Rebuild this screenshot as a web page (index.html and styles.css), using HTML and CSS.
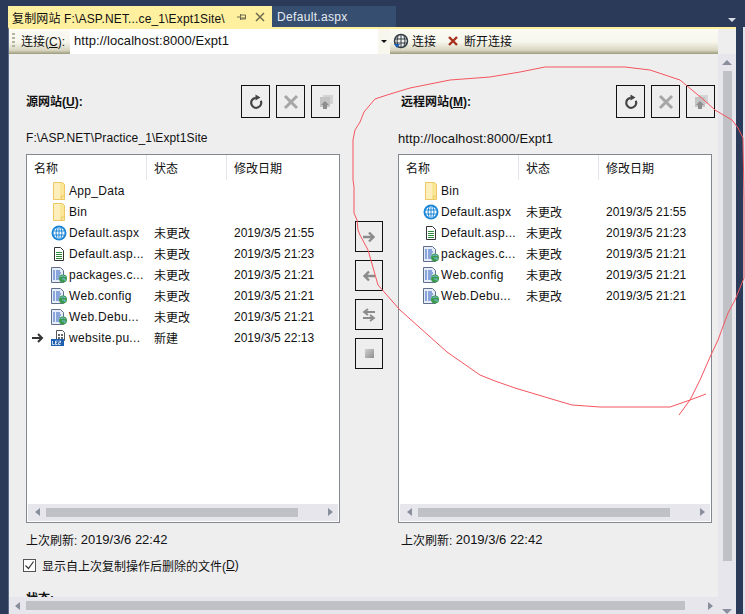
FILE: index.html
```html
<!DOCTYPE html>
<html lang="zh">
<head>
<meta charset="utf-8">
<title>复制网站</title>
<link rel="stylesheet" href="styles.css">
</head>
<body>
<div class="tabstrip">
  <div class="tab active"><span class="tab-title">复制网站 F:\ASP.NET...ce_1\Expt1Site\</span>
    <svg class="tab-pin" width="10" height="10" viewBox="0 0 10 10"><path d="M0 5h3M3.500 2v6M3.500 3h5v4h-5M4 6h4" fill="none" stroke="#6d6a4e"/></svg>
    <svg class="tab-x" width="10" height="10" viewBox="0 0 10 10"><path d="M1 1l8 8M9 1l-8 8" fill="none" stroke="#6d6a4e" stroke-width="1.5"/></svg>
  </div>
  <div class="tab inactive">Default.aspx</div>
  <div class="tab-spacer"></div>
  <svg class="tab-drop" width="8" height="5" viewBox="0 0 8 5"><path d="M0 0h8L4 4z" fill="#d6dbe6"/></svg>
</div>
<div class="frame">
  <div class="doc">
    <div class="toolbar">
      <span class="grip"></span>
      <span class="tb-label">连接(<u>C</u>):</span>
      <div class="url"><span>http://localhost:8000/Expt1</span><i class="url-arrow"></i></div>
      <svg class="tb-globe" width="16" height="16" viewBox="0 0 16 16"><circle cx="8" cy="8" r="6.500" fill="#f4f4ee" stroke="#333c46" stroke-width="1.500"/><path d="M2 6h12M2 10h12M8 2v12M5 3q-2 5 0 10M11 3q2 5 0 10" fill="none" stroke="#333c46"/><path d="M1 11h6l-3 4z" fill="#1c5fb0"/></svg>
      <span class="tb-btn">连接</span>
      <svg class="tb-x" width="10" height="10" viewBox="0 0 10 10"><path d="M1 1l8 8M9 1l-8 8" stroke="#a5301c" stroke-width="2.400" fill="none"/></svg>
      <span class="tb-btn">断开连接</span>
    </div>
    <div class="content">
      <div class="panes">
        <section class="pane">
          <div class="pane-head">
            <strong class="pane-title">源网站(<u>U</u>):</strong>
            <div class="tools">
              <button class="ic"><svg width="16" height="16" viewBox="0 0 16 16"><use href="#refresh"/></svg></button>
              <button class="ic"><svg width="16" height="16" viewBox="0 0 16 16"><use href="#cancel"/></svg></button>
              <button class="ic"><svg width="16" height="16" viewBox="0 0 16 16"><use href="#publish"/></svg></button>
            </div>
          </div>
          <div class="pane-path">F:\ASP.NET\Practice_1\Expt1Site</div>
          <div class="list">
            <div class="list-head"><span class="c1">名称</span><span class="c2">状态</span><span class="c3">修改日期</span></div>
            <div class="rows">
              <div class="row"><span class="mark"></span><svg class="fi" width="16" height="16" viewBox="0 0 16 16"><use href="#folder"/></svg><span class="n">App_Data</span></div>
              <div class="row"><span class="mark"></span><svg class="fi" width="16" height="16" viewBox="0 0 16 16"><use href="#folder"/></svg><span class="n">Bin</span></div>
              <div class="row"><span class="mark"></span><svg class="fi" width="16" height="16" viewBox="0 0 16 16"><use href="#globe"/></svg><span class="n">Default.aspx</span><span class="s">未更改</span><span class="d">2019/3/5 21:55</span></div>
              <div class="row"><span class="mark"></span><svg class="fi" width="16" height="16" viewBox="0 0 16 16"><use href="#code"/></svg><span class="n">Default.asp...</span><span class="s">未更改</span><span class="d">2019/3/5 21:23</span></div>
              <div class="row"><span class="mark"></span><svg class="fi" width="16" height="16" viewBox="0 0 16 16"><use href="#config"/></svg><span class="n">packages.c...</span><span class="s">未更改</span><span class="d">2019/3/5 21:21</span></div>
              <div class="row"><span class="mark"></span><svg class="fi" width="16" height="16" viewBox="0 0 16 16"><use href="#config"/></svg><span class="n">Web.config</span><span class="s">未更改</span><span class="d">2019/3/5 21:21</span></div>
              <div class="row"><span class="mark"></span><svg class="fi" width="16" height="16" viewBox="0 0 16 16"><use href="#config"/></svg><span class="n">Web.Debu...</span><span class="s">未更改</span><span class="d">2019/3/5 21:21</span></div>
              <div class="row"><span class="mark"><svg width="12" height="10" viewBox="0 0 12 10"><path d="M0 5h9M6 1l4 4-4 4" fill="none" stroke="#333" stroke-width="2"/></svg></span><svg class="fi" width="16" height="16" viewBox="0 0 16 16"><path d="M5.500 .5h6l2 2v8h-8z" fill="#fff" stroke="#555"/><path d="M7 4h2v2H7zM10 4h2v2h-2zM7 7h2v2H7zM10 7h2v2h-2z" fill="#666"/><path d="M0 9h13v7H0z" fill="#1c5fb0"/><path d="M1.500 11v3.500h2M4.500 11v3.500h2M4.500 12.700h1.500M4.500 11h2M7.500 11h2v1.700h-2v1.800h2" stroke="#fff" fill="none" stroke-width=".8"/></svg><span class="n">website.pu...</span><span class="s">新建</span><span class="d">2019/3/5 22:13</span></div>
            </div>
            <div class="hbar"><i class="al"></i><span class="thumb"></span><i class="ar"></i></div>
          </div>
          <div class="refresh">上次刷新: <span class="stamp">2019/3/6 22:42</span></div>
        </section>
        <div class="mid">
          <button class="ic mb"><svg width="16" height="16" viewBox="0 0 16 16"><path d="M2 8h10M8 3.500L12.500 8 8 12.500" fill="none" stroke="#8b8b8b" stroke-width="2.400"/></svg></button>
          <button class="ic mb"><svg width="16" height="16" viewBox="0 0 16 16"><path d="M14 8H4M8 3.500L3.500 8 8 12.500" fill="none" stroke="#8b8b8b" stroke-width="2.400"/></svg></button>
          <button class="ic mb"><svg width="16" height="16" viewBox="0 0 16 16"><path d="M14 5H4M7 2L3 5l4 3" fill="none" stroke="#8b8b8b" stroke-width="1.800"/><path d="M2 11h10M9 8l4 3-4 3" fill="none" stroke="#8b8b8b" stroke-width="1.800"/></svg></button>
          <button class="ic mb"><span class="stop"></span></button>
        </div>
        <section class="pane right">
          <div class="pane-head">
            <strong class="pane-title">远程网站(<u>M</u>):</strong>
            <div class="tools">
              <button class="ic"><svg width="16" height="16" viewBox="0 0 16 16"><use href="#refresh"/></svg></button>
              <button class="ic"><svg width="16" height="16" viewBox="0 0 16 16"><use href="#cancel"/></svg></button>
              <button class="ic"><svg width="16" height="16" viewBox="0 0 16 16"><use href="#publish"/></svg></button>
            </div>
          </div>
          <div class="pane-path url-path">http://localhost:8000/Expt1</div>
          <div class="list">
            <div class="list-head"><span class="c1">名称</span><span class="c2">状态</span><span class="c3">修改日期</span></div>
            <div class="rows">
              <div class="row"><span class="mark"></span><svg class="fi" width="16" height="16" viewBox="0 0 16 16"><use href="#folder"/></svg><span class="n">Bin</span></div>
              <div class="row"><span class="mark"></span><svg class="fi" width="16" height="16" viewBox="0 0 16 16"><use href="#globe"/></svg><span class="n">Default.aspx</span><span class="s">未更改</span><span class="d">2019/3/5 21:55</span></div>
              <div class="row"><span class="mark"></span><svg class="fi" width="16" height="16" viewBox="0 0 16 16"><use href="#code"/></svg><span class="n">Default.asp...</span><span class="s">未更改</span><span class="d">2019/3/5 21:23</span></div>
              <div class="row"><span class="mark"></span><svg class="fi" width="16" height="16" viewBox="0 0 16 16"><use href="#config"/></svg><span class="n">packages.c...</span><span class="s">未更改</span><span class="d">2019/3/5 21:21</span></div>
              <div class="row"><span class="mark"></span><svg class="fi" width="16" height="16" viewBox="0 0 16 16"><use href="#config"/></svg><span class="n">Web.config</span><span class="s">未更改</span><span class="d">2019/3/5 21:21</span></div>
              <div class="row"><span class="mark"></span><svg class="fi" width="16" height="16" viewBox="0 0 16 16"><use href="#config"/></svg><span class="n">Web.Debu...</span><span class="s">未更改</span><span class="d">2019/3/5 21:21</span></div>
            </div>
            <div class="hbar"><i class="al"></i><span class="thumb"></span><i class="ar"></i></div>
          </div>
          <div class="refresh">上次刷新: <span class="stamp">2019/3/6 22:42</span></div>
        </section>
      </div>
      <label class="check"><span class="box"><svg width="13" height="13" viewBox="0 0 13 13"><path d="M2.500 6.500l3 3 5-7" fill="none" stroke="#333" stroke-width="1.200"/></svg></span>显示自上次复制操作后删除的文件(<u>D</u>)</label>
      <strong class="status">状态:</strong>
      <div class="vbar"><i class="au"></i><span class="vthumb"></span><i class="ad"></i></div>
      <div class="hbar2"><i class="al"></i><span class="thumb2"></span><i class="ar"></i></div>
    </div>
  </div>
  <div class="edge"></div>
</div>
<svg class="defs" width="0" height="0">
  <defs>
    <g id="folder"><path d="M2.500 -.5h9l2 2v15h-11z" fill="#fbe596" stroke="#ecc964"/><path d="M3 0h6v16H3z" fill="#fdefbc"/><path d="M10.500 16v-3h3" fill="none" stroke="#ecc964"/></g>
    <g id="globe"><circle cx="8" cy="8" r="7.500" fill="#1c86d6"/><circle cx="8" cy="8" r="5.500" fill="#fff"/><path d="M3 6h10M3 10h10M8 3v10M6 3q-2 5 0 10M10 3q2 5 0 10" stroke="#1c86d6" fill="none"/></g>
    <g id="code"><path d="M3.500 1.500h6l3 3v10h-9z" fill="#fff" stroke="#333"/><path d="M5 6.500h6M5 8.500h6M5 10.500h6M5 12.500h6" stroke="#2d8a3a"/></g>
    <g id="config"><path d="M.5 .5h9l3 3v12H.5z" fill="#e6ecf8" stroke="#5f6f8c"/><path d="M2 4h2M5 4h4M2 6h2M5 6h5M2 8h2M5 8h4M2 10h2M5 10h3M2 12h2M5 12h3" stroke="#2c5fbd"/><circle cx="12" cy="11.500" r="4" fill="#3b9a4a"/><path d="M9.500 9.800q2.500-2 5 0M11 12h3v2" stroke="#7db8e8" fill="none"/></g>
    <g id="refresh"><path d="M12.800 6.800A5 5 0 1 1 7.800 3.800" fill="none" stroke="#444" stroke-width="2.200"/><path d="M7.500 0.500l5 3-5 3z" fill="#444"/></g>
    <g id="cancel"><path d="M2 2l12 12M14 2L2 14" stroke="#a6a6a6" stroke-width="3" fill="none"/></g>
    <g id="publish"><path d="M5 1h10v9H5z" fill="#d4d4d4"/><path d="M2 3h10v10H2z" fill="#c4c4c4"/><path d="M7 7l4 4H9v4H5v-4H3z" fill="#8e8e8e"/></g>
  </defs>
</svg>
<svg class="scribble" width="745" height="614" viewBox="0 0 745 614">
  <path d="M358 230L357 220L354 213L354 187L353 180L353 140L355 130L360 122L364 112L375 99L387 95L400 91L410 88L450 80L490 77L520 72L545 67L625 67L650 70L680 80L704 100L715 110L732 120L738 128L743 138L744 200L744 278L735 300L728 313L718 340L710 357L700 380L690 400L679 415" fill="none" stroke="#f5555f"/>
  <path d="M358 230L360 235L368 250L378 285L400 310L447 352L480 375L495 381L515 388L555 400L572 405L600 407L670 407L690 400L706 394" fill="none" stroke="#f5555f"/>
</svg>
</body>
</html>
```
FILE: styles.css
```css
* { box-sizing: border-box; }
html, body { margin: 0; height: 614px; overflow: hidden; }
body { background: #2b3a58; font: 12px "Liberation Sans", "Noto Sans CJK SC", sans-serif; color: #111; position: relative; }
.tabstrip { height: 27px; padding: 6px 0 0 8px; display: flex; }
.tab { height: 21px; display: flex; align-items: center; font-size: 12px; }
.tab.active { width: 264px; background: #fff0a0; padding-left: 4px; height: 22px; }
.tab-title { width: 221px; white-space: nowrap; overflow: hidden; letter-spacing: .15px; }
.tab-pin { margin-left: 4px; flex: none; }
.tab-x { margin-left: 8px; flex: none; }
.tab.inactive { width: 124px; background: #364f70; color: #e6ebf2; padding-left: 5px; letter-spacing: .33px; }
.tab-spacer { flex: 1; }
.tab-drop { margin: 12px 9px 0 0; }
.frame { height: 587px; display: flex; padding-left: 8px; }
.doc { width: 728px; height: 587px; border-top: 2px solid #fff0a0; border-left: 1px solid #5a6a88; background: #eeeeef; display: flex; flex-direction: column; overflow: hidden; flex: none; }
.edge { flex: 1; margin-left: 7px; background: #dfe2ec; }
.toolbar { height: 25px; width: 709px; display: flex; align-items: center; padding-bottom: 2px; background: linear-gradient(#fbfaf3 0, #f8f7ee 50%, #d8d6c0 85%, #9b9a7c 100%); }
.grip { width: 3px; height: 16px; margin-left: 3px; background: repeating-linear-gradient(#b5b4a0 0 2px, transparent 2px 4px); }
.tb-label { margin-left: 6px; width: 49px; white-space: nowrap; }
.url { width: 320px; height: 25px; margin-bottom: -2px; background: #fff; display: flex; align-items: center; padding: 0 0 2px 4px; position: relative; font-size: 13px; letter-spacing: .07px; flex: none; }
.url-arrow { position: absolute; right: 0; top: 0; bottom: 0; width: 12px; background: #f8f7ee; }
.url-arrow::after { content: ""; position: absolute; left: 3px; top: 11px; border: 3px solid transparent; border-top: 3px solid #111; border-bottom: 0; }
.tb-globe { margin-left: 3px; flex: none; }
.tb-btn { margin-left: 3px; }
.tb-x { margin-left: 12px; flex: none; }
.tb-x + .tb-btn { margin-left: 6px; }
.content { position: relative; flex: 1; padding: 31px 0 0 17px; }
.panes { display: flex; }
.pane { width: 314px; flex: none; }
.pane.right { margin-left: 15px; }
.pane-head { height: 33px; display: flex; justify-content: space-between; align-items: center; }
.pane-title { font-weight: bold; margin-bottom: 2px; }
.right .pane-title { margin-left: 3px; }
.tools { display: flex; gap: 6px; }
.right .tools { margin-right: -3px; }
.ic { width: 29px; height: 33px; padding: 0; border: 1px solid #111; background: #eeeeef; display: flex; align-items: center; justify-content: center; }
.pane-path { height: 36px; padding-top: 13px; letter-spacing: .1px; }
.url-path { font-size: 13px; letter-spacing: .07px; }
.list { width: 314px; height: 369px; border: 1px solid #828790; background: #fff; display: flex; flex-direction: column; }
.list-head { height: 25px; display: flex; align-items: center; }
.list-head span { height: 25px; display: flex; align-items: center; padding-left: 7px; border-right: 1px solid #e4e5ea; }
.c1 { width: 120px; }
.c2 { width: 80px; }
.c3 { flex: 1; border-right: 0 !important; }
.rows { flex: 1; }
.row { height: 21px; display: flex; align-items: center; }
.mark { width: 20px; padding-left: 5px; display: flex; }
.fi { margin-left: 4px; flex: none; overflow: visible; }
.n { width: 85px; margin-left: 2px; white-space: nowrap; letter-spacing: .3px; }
.s { width: 80px; }
.hbar { height: 17px; margin: 0 1px 1px; position: relative; background: #e6e6ec; flex: none; }
.hbar .thumb { position: absolute; left: 18px; top: 4px; width: 252px; height: 9px; background: #c0c1c7; }
.hbar .al { position: absolute; left: 7px; top: 4px; }
.hbar .ar { position: absolute; left: 300px; top: 4px; }
.al { border: 4px solid transparent; border-left: 0; border-right: 5px solid #8a8d9e; }
.ar { border: 4px solid transparent; border-right: 0; border-left: 5px solid #8a8d9e; }
.refresh { margin-top: 8px; height: 16px; display: flex; align-items: center; white-space: pre; }
.stamp { font-size: 13px; }
.right .refresh { margin-left: 3px; }
.mid { width: 28px; margin-left: 15px; padding-top: 136px; display: flex; flex-direction: column; gap: 8px; flex: none; }
.mb { width: 28px; height: 31px; }
.stop { width: 9px; height: 9px; background: linear-gradient(135deg, #d0d0d0, #8e8e8e); }
.check { display: flex; align-items: center; margin: 9px 0 0 -3px; height: 18px; }
.box { width: 13px; height: 13px; border: 1px solid #555; background: #fff; margin-right: 6px; display: flex; }
.box svg { margin: -1px; }
.status { display: block; margin-top: 15px; }
.vbar { position: absolute; right: 0; top: 0; bottom: 0; width: 18px; background: #e6e6ec; display: flex; flex-direction: column; align-items: center; }
.vthumb { width: 9px; height: 492px; margin-top: 6px; background: #c0c1c7; }
.au { margin-top: 6px; border: 5px solid transparent; border-top: 0; border-bottom: 5px solid #8a8d9e; }
.ad { margin-top: 48px; border: 5px solid transparent; border-bottom: 0; border-top: 5px solid #8a8d9e; }
.hbar2 { position: absolute; left: 0; right: 18px; bottom: 0; height: 17px; background: #e6e6ec; display: flex; align-items: center; padding: 0 5px 0 6px; }
.thumb2 { width: 659px; height: 9px; background: #c0c1c7; margin-left: 6px; }
.hbar2 .ar { margin-left: auto; }
.defs { position: absolute; }
.scribble { position: absolute; left: 0; top: 0; pointer-events: none; }
```
